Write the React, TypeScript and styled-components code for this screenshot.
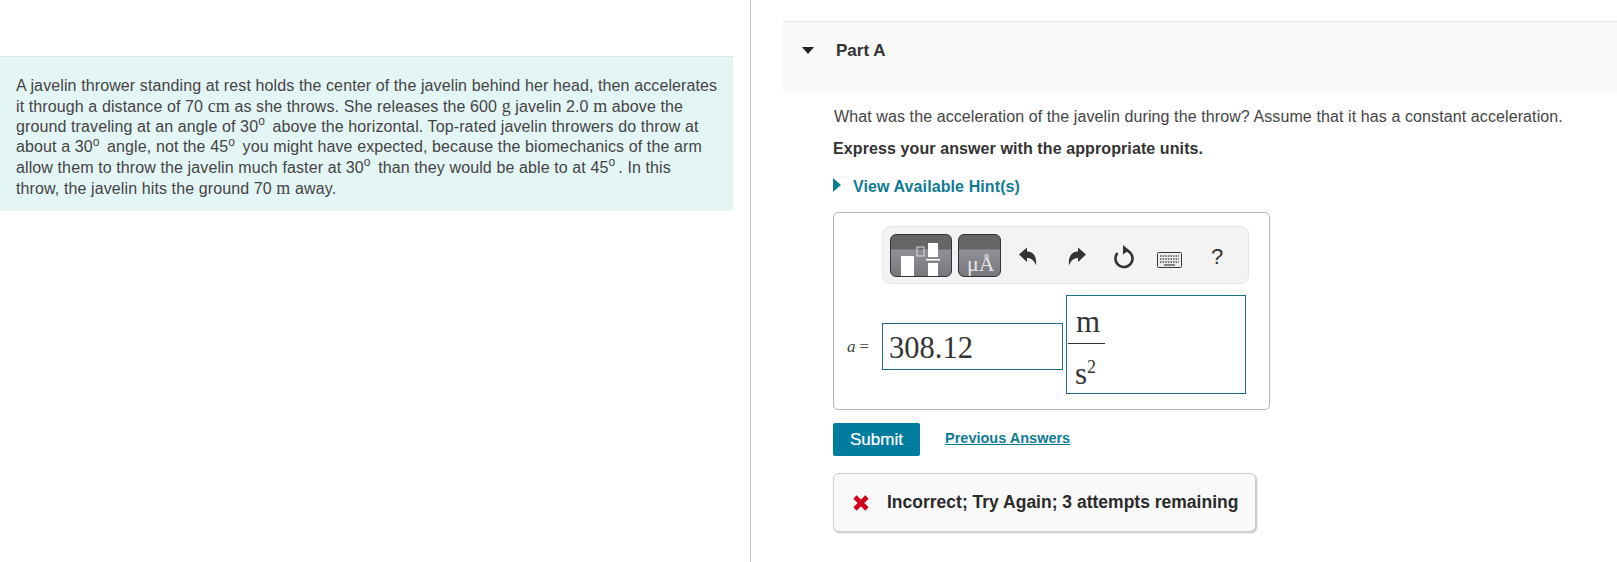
import * as React from 'react'
import styled, {createGlobalStyle} from 'styled-components'

const Global = createGlobalStyle`
  html, body {
    margin: 0;
    padding: 0;
    background: #fff;
  }
  body {
    font-family: "Liberation Sans", Arial, sans-serif;
    color: #333;
    overflow: hidden;
  }
`

const Page = styled.div`
  display: grid;
  grid-template-columns: 751px 1fr;
  height: 562px;
`

const LeftColumn = styled.div`
  border-right: 1px solid #c8c8c8;
  padding-top: 56px;
`

const Intro = styled.div`
  width: 733px;
  height: 155px;
  box-sizing: border-box;
  background: #e4f5f6;
  border-top: 1px solid #d9e6e8;
  padding: 19px 0 0 16px;
  font-size: 16px;
  line-height: 20.4px;
  letter-spacing: 0.11px;
  color: #444;
`

const IntroLine = styled.div`
  height: 20.4px;
  white-space: nowrap;
`

const Unit = styled.span`
  font-family: "Liberation Serif", serif;
  font-size: 18px;
`

const Deg = styled.sup`
  font-size: 12px;
  line-height: 0;
  margin-right: 3px;
`

const RightColumn = styled.div`
  padding: 21px 0 0 32px;
`

const PartHeader = styled.div`
  display: flex;
  align-items: flex-start;
  height: 72px;
  box-sizing: border-box;
  background: #f9f9f9;
  border-top: 1px solid #e2e2e2;
  padding: 19px 0 0 19px;
  font-size: 17px;
  font-weight: bold;
  color: #333;
`

const DownCaret = styled.span`
  width: 0;
  height: 0;
  border-left: 6px solid transparent;
  border-right: 6px solid transparent;
  border-top: 7px solid #222;
  margin: 6px 22px 0 0;
`

const PartBody = styled.div`
  padding: 0 0 0 50px;
`

const Question = styled.p`
  margin: 15px 0 0 1px;
  font-size: 16px;
  line-height: 18px;
  letter-spacing: 0.1px;
  color: #444;
  white-space: nowrap;
`

const Instruction = styled.p`
  margin: 14px 0 0;
  font-size: 16px;
  line-height: 18px;
  letter-spacing: 0.1px;
  font-weight: bold;
  color: #333;
`

const HintToggle = styled.div`
  display: flex;
  align-items: center;
  margin-top: 20px;
  font-size: 16px;
  line-height: 18px;
  letter-spacing: 0.1px;
  font-weight: bold;
  color: #0f7a94;
`

const RightCaret = styled.span`
  width: 0;
  height: 0;
  border-top: 7px solid transparent;
  border-bottom: 7px solid transparent;
  border-left: 8px solid #0f7a94;
  margin: 0 12px 4px 0;
`

const AnswerBox = styled.div`
  width: 437px;
  height: 198px;
  box-sizing: border-box;
  margin-top: 16px;
  border: 1px solid #b4b4b4;
  border-radius: 5px;
  padding: 13px 0 0 13px;
`

const Toolbar = styled.div`
  display: flex;
  align-items: center;
  width: 367px;
  height: 58px;
  box-sizing: border-box;
  margin-left: 35px;
  background: #f3f3f3;
  border: 1px solid #e6e6e6;
  border-radius: 8px;
  padding: 0 0 0 7px;
`

const TemplateButton = styled.div<{$width: number}>`
  position: relative;
  width: ${p => p.$width}px;
  height: 43px;
  box-sizing: border-box;
  margin-right: 6px;
  border-radius: 6px;
  border: 1px solid #333;
  overflow: hidden;
  background: linear-gradient(#666 0, #666 14px, #8f8f96 15px, #77777d 100%);
`

const UnitGlyph = styled.span`
  position: absolute;
  left: 8px;
  bottom: -1px;
  font-family: "Liberation Serif", serif;
  font-size: 22px;
  line-height: 26px;
  color: #e6e6e6;
`

const ToolIcon = styled.button<{$width: number; $drop?: number}>`
  display: flex;
  align-items: center;
  justify-content: center;
  width: ${p => p.$width}px;
  height: 36px;
  padding: ${p => p.$drop ?? 3}px 0 0;
  border: 0;
  background: transparent;
  color: #333;
  font-family: "Liberation Sans", sans-serif;
  font-size: 22px;
`

const EquationRow = styled.div`
  display: flex;
  align-items: center;
  margin-top: 11px;
`

const VarLabel = styled.span`
  width: 35px;
  margin-top: 5px;
  font-family: "Liberation Serif", serif;
  font-size: 17px;
  color: #444;
  white-space: nowrap;
`

const VarName = styled.i`
  margin-right: 4px;
`

const ValueInput = styled.div`
  width: 181px;
  height: 47px;
  box-sizing: border-box;
  margin-top: 4px;
  border: 1px solid #1a6f82;
  padding-left: 6px;
  font-family: "Liberation Serif", serif;
  font-size: 30.5px;
  line-height: 48px;
  color: #333;
`

const UnitInput = styled.div`
  width: 180px;
  height: 99px;
  box-sizing: border-box;
  margin-left: 3px;
  border: 1px solid #1a6f82;
  padding: 4px 0 0 1px;
  font-family: "Liberation Serif", serif;
  color: #333;
`

const Fraction = styled.div`
  width: 37px;
  text-align: center;
  font-size: 31px;
`

const Numerator = styled.div`
  height: 43px;
  line-height: 44px;
  padding-left: 3px;
  border-bottom: 1px solid #333;
`

const Denominator = styled.div`
  height: 46px;
  line-height: 60px;
  text-align: left;
  padding-left: 7px;
`

const Exp = styled.sup`
  font-size: 18px;
  line-height: 0;
`

const ActionRow = styled.div`
  display: flex;
  align-items: center;
  margin-top: 13px;
`

const SubmitButton = styled.button`
  width: 87px;
  height: 33px;
  padding: 0;
  border: 0;
  border-radius: 2px;
  background: #007c9e;
  color: #fff;
  font-family: "Liberation Sans", sans-serif;
  font-size: 17px;
  -webkit-text-stroke: 0.2px #fff;
`

const PrevLink = styled.a`
  margin: 0 0 3px 25px;
  font-size: 14.5px;
  font-weight: bold;
  color: #0f7a94;
  text-decoration: underline;
`

const Feedback = styled.div`
  display: flex;
  align-items: center;
  width: 423px;
  height: 59px;
  box-sizing: border-box;
  margin-top: 17px;
  padding-left: 18px;
  background: #f9f9f9;
  border: 1px solid #cfcfcf;
  border-radius: 6px;
  box-shadow: 1px 1px 2px #bbb;
  font-size: 17.5px;
  font-weight: bold;
  color: #2b2b2b;
  white-space: nowrap;
`

const FeedbackIcon = styled.svg`
  width: 18px;
  height: 18px;
  margin-right: 17px;
  flex: none;
`

const App = () => {
  return (
    <Page>
      <Global />
      <LeftColumn>
        <Intro>
          <IntroLine>A javelin thrower standing at rest holds the center of the javelin behind her head, then accelerates</IntroLine>
          <IntroLine>it through a distance of 70 <Unit>cm</Unit> as she throws. She releases the 600 <Unit>g</Unit> javelin 2.0 <Unit>m</Unit> above the</IntroLine>
          <IntroLine>ground traveling at an angle of 30<Deg>o</Deg> above the horizontal. Top-rated javelin throwers do throw at</IntroLine>
          <IntroLine>about a 30<Deg>o</Deg> angle, not the 45<Deg>o</Deg> you might have expected, because the biomechanics of the arm</IntroLine>
          <IntroLine>allow them to throw the javelin much faster at 30<Deg>o</Deg> than they would be able to at 45<Deg>o</Deg>. In this</IntroLine>
          <IntroLine>throw, the javelin hits the ground 70 <Unit>m</Unit> away.</IntroLine>
        </Intro>
      </LeftColumn>
      <RightColumn>
        <PartHeader>
          <DownCaret />
          Part A
        </PartHeader>
        <PartBody>
          <Question>What was the acceleration of the javelin during the throw? Assume that it has a constant acceleration.</Question>
          <Instruction>Express your answer with the appropriate units.</Instruction>
          <HintToggle><RightCaret />View Available Hint(s)</HintToggle>
          <AnswerBox>
            <Toolbar>
              <TemplateButton $width={62}>
                <svg width="60" height="41" viewBox="0 0 60 41">
                  <rect x="10" y="21" width="13" height="20" fill="#fff" />
                  <rect x="26" y="12" width="7" height="9" fill="none" stroke="#ddd" />
                  <rect x="37" y="8" width="10" height="14" fill="#fff" />
                  <rect x="35" y="24" width="14" height="1.5" fill="#fff" />
                  <rect x="37" y="28" width="10" height="13" fill="#fff" />
                </svg>
              </TemplateButton>
              <TemplateButton $width={43}>
                <UnitGlyph>μÅ</UnitGlyph>
              </TemplateButton>
              <ToolIcon $width={42}>
                <svg width="18" height="19" viewBox="0 0 18 19">
                  <path d="M0 7.5 L8 0.5 V4.5 C14 4.5 18 9 17 18.5 C15 13 12 11 8 11 V15 Z" fill="#333" />
                </svg>
              </ToolIcon>
              <ToolIcon $width={56}>
                <svg width="18" height="19" viewBox="0 0 18 19">
                  <path d="M18 7.5 L10 0.5 V4.5 C4 4.5 0 9 1 18.5 C3 13 6 11 10 11 V15 Z" fill="#333" />
                </svg>
              </ToolIcon>
              <ToolIcon $width={38}>
                <svg width="22" height="24" viewBox="0 0 22 24">
                  <path d="M11 5 A8.5 8.5 0 1 1 4.5 8" fill="none" stroke="#333" strokeWidth="2.6" />
                  <path d="M10 0 L16 5 L10 9.5 Z" fill="#333" />
                </svg>
              </ToolIcon>
              <ToolIcon $width={52} $drop={10}>
                <svg width="25" height="16" viewBox="0 0 25 16">
                  <rect x="0.5" y="0.5" width="24" height="15" rx="1" fill="#eee" stroke="#333" />
                  <path d="M3 4 H22 M3 7 H22 M3 10 H22" stroke="#555" strokeWidth="1.6" strokeDasharray="1.6 1" />
                  <path d="M7 13 H18" stroke="#555" strokeWidth="1.4" />
                </svg>
              </ToolIcon>
              <ToolIcon $width={44}>?</ToolIcon>
            </Toolbar>
            <EquationRow>
              <VarLabel><VarName>a</VarName>=</VarLabel>
              <ValueInput>308.12</ValueInput>
              <UnitInput>
                <Fraction>
                  <Numerator>m</Numerator>
                  <Denominator>s<Exp>2</Exp></Denominator>
                </Fraction>
              </UnitInput>
            </EquationRow>
          </AnswerBox>
          <ActionRow>
            <SubmitButton>Submit</SubmitButton>
            <PrevLink>Previous Answers</PrevLink>
          </ActionRow>
          <Feedback>
            <FeedbackIcon viewBox="0 0 18 18">
              <path d="M3 3 L15 15 M15 3 L3 15" stroke="#d0021b" strokeWidth="4.6" />
            </FeedbackIcon>
            Incorrect; Try Again; 3 attempts remaining
          </Feedback>
        </PartBody>
      </RightColumn>
    </Page>
  )
}

export default App
